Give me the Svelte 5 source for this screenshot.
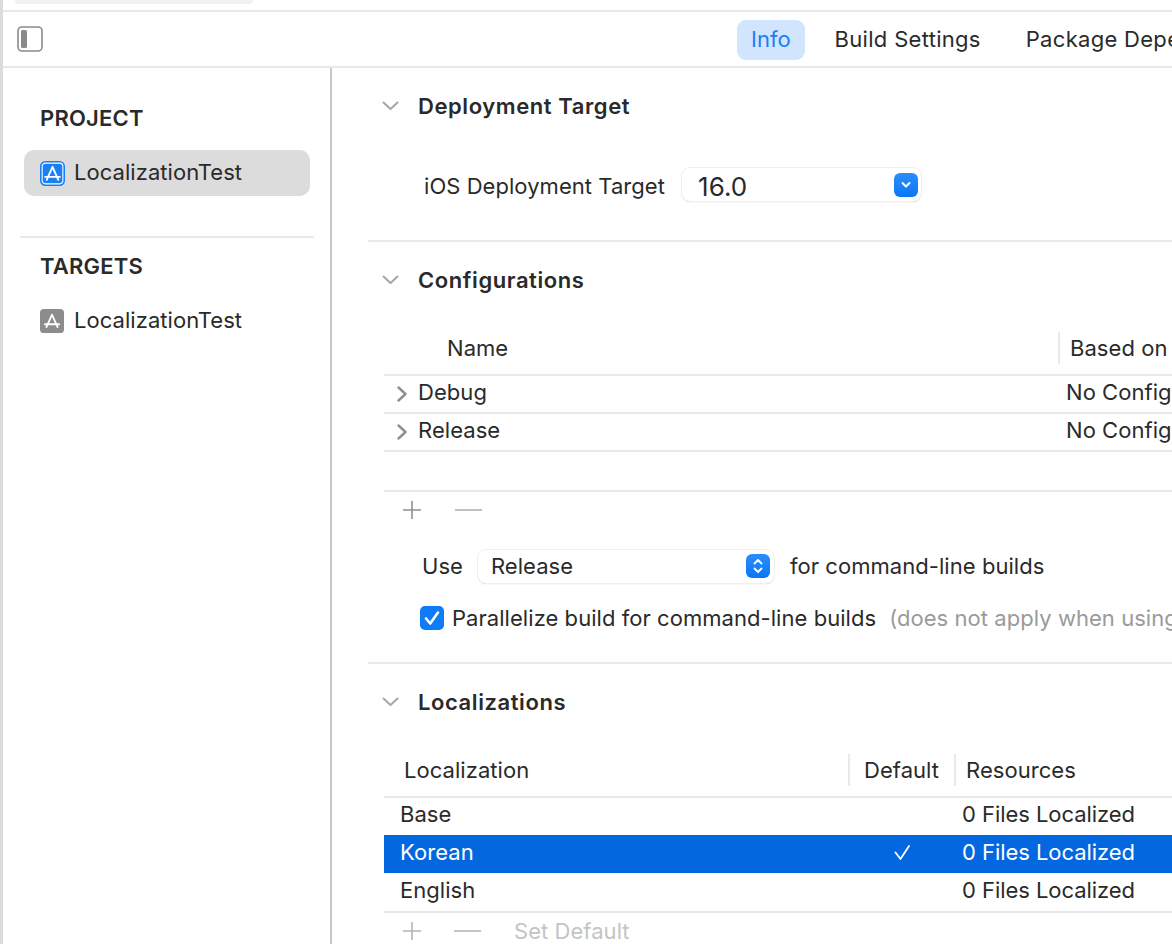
<script>
  const tabs = ['Info', 'Build Settings', 'Package Dependencies']
  const configs = [
    { name: 'Debug', based: 'No Configurations Set' },
    { name: 'Release', based: 'No Configurations Set' },
  ]
  const locales = [
    { name: 'Base', files: '0 Files Localized' },
    { name: 'Korean', files: '0 Files Localized', selected: true },
    { name: 'English', files: '0 Files Localized' },
  ]
</script>

{#snippet appIcon()}
  <path d="M9.3 4.4 5 14M9.3 4.4 13.6 14M3.8 11.8h11" fill="none" stroke="#fff" stroke-width="1.4" stroke-linecap="round" stroke-linejoin="round" />
{/snippet}

{#snippet disclosure()}
  <svg class="fold" width="17" height="10" viewBox="0 0 17 10"><path d="M1.5 1.5 8.5 8l7-6.5" fill="none" stroke="#a6a6a6" stroke-width="2" stroke-linecap="round" stroke-linejoin="round" /></svg>
{/snippet}

{#snippet chevron()}
  <svg class="chev" width="12" height="18" viewBox="0 0 12 18"><path d="M1.5 2.5 8.5 9l-7 6.5" fill="none" stroke="#8f8f8f" stroke-width="2.4" stroke-linecap="round" stroke-linejoin="round" /></svg>
{/snippet}

{#snippet addRemove(plusColor, minusColor)}
  <svg class="plus" width="18" height="18" viewBox="0 0 18 18"><path d="M9 0v18M0 9h18" stroke={plusColor} stroke-width="1.6" /></svg>
  <span class="minus" style="background:{minusColor}"></span>
{/snippet}

<div class="window">
  <div class="titlebar"><div class="tab-pill"></div></div>
  <header class="toolbar">
    <svg class="toggle" width="26" height="26" viewBox="0 0 26 26">
      <rect x="1" y="1" width="24" height="24" rx="4" fill="#fff" stroke="#8a8a8a" stroke-width="1.6" />
      <rect x="4" y="4" width="6" height="18" rx="1.5" fill="#8a8a8a" />
    </svg>
    <nav class="tabs">
      {#each tabs as tab, i}
        <span class="tab" class:active={i === 0}>{tab}</span>
      {/each}
    </nav>
  </header>

  <div class="body">
    <aside class="sidebar">
      <h3 class="group project">PROJECT</h3>
      <div class="item selected">
        <svg width="25" height="25" viewBox="0 0 18.6 18.6">
          <rect x=".6" y=".6" width="17.4" height="17.4" rx="3.4" fill="#fff" stroke="#1a7ff5" stroke-width="1.2" />
          <rect x="2" y="2" width="14.6" height="14.6" rx="2.2" fill="#1a7ff5" />
          {@render appIcon()}
        </svg>
        <span>LocalizationTest</span>
      </div>
      <hr />
      <h3 class="group">TARGETS</h3>
      <div class="item plain">
        <svg width="24" height="24" viewBox="0 0 18.6 18.6">
          <rect width="18.6" height="18.6" rx="3" fill="#8c8c8c" />
          {@render appIcon()}
        </svg>
        <span>LocalizationTest</span>
      </div>
    </aside>

    <main class="content">
      <section class="deployment">
        <div class="section-head">{@render disclosure()}<h2>Deployment Target</h2></div>
        <div class="target-row">
          <span class="target-label">iOS Deployment Target</span>
          <div class="select target">
            <span class="target-value">16.0</span>
            <span class="stepper">
              <svg width="12" height="8" viewBox="0 0 12 8"><path d="M2.5 2 6 5.5 9.5 2" fill="none" stroke="#fff" stroke-width="2" stroke-linecap="round" stroke-linejoin="round" /></svg>
            </span>
          </div>
        </div>
      </section>

      <section class="configurations">
        <div class="section-head">{@render disclosure()}<h2>Configurations</h2></div>
        <div class="table">
          <div class="config-head">
            <span class="col-name">Name</span>
            <span class="col-based">Based on Configuration File</span>
          </div>
          {#each configs as c}
            <div class="config-row">
              {@render chevron()}
              <span class="config-name">{c.name}</span>
              <span class="config-based">{c.based}</span>
            </div>
          {/each}
          <div class="spacer"></div>
          <div class="actions">{@render addRemove('#8f8f8f', '#c0c0c0')}</div>
        </div>
        <div class="use-row">
          <span class="use-label">Use</span>
          <div class="select use">
            <span>Release</span>
            <span class="stepper">
              <svg width="14" height="20" viewBox="0 0 14 20"><path d="M3.5 7.5 7 4l3.5 3.5M3.5 12.5 7 16l3.5-3.5" fill="none" stroke="#fff" stroke-width="1.8" stroke-linecap="round" stroke-linejoin="round" /></svg>
            </span>
          </div>
          <span class="use-after">for command-line builds</span>
        </div>
        <div class="check-row">
          <span class="checkbox">
            <svg width="24" height="24" viewBox="0 0 24 24"><path d="M6 12.5l4.2 5L18 6.5" fill="none" stroke="#fff" stroke-width="2.6" stroke-linecap="round" stroke-linejoin="round" /></svg>
          </span>
          <span>Parallelize build for command-line builds</span>
          <span class="hint">(does not apply when using schemes)</span>
        </div>
      </section>

      <section class="localizations">
        <div class="section-head">{@render disclosure()}<h2>Localizations</h2></div>
        <div class="table">
          <div class="loc-head">
            <span class="loc-col first">Localization</span>
            <span class="loc-col second">Default</span>
            <span class="loc-col third">Resources</span>
          </div>
          {#each locales as l}
            <div class="loc-row" class:selected={l.selected}>
              <span class="loc-name">{l.name}</span>
              <span class="loc-default">
                {#if l.selected}
                  <svg width="17" height="15" viewBox="0 0 17 15"><path d="M1.5 7.5 6.5 14 15 1" fill="none" stroke="#fff" stroke-width="1.8" stroke-linecap="round" stroke-linejoin="round" /></svg>
                {/if}
              </span>
              <span class="loc-files">{l.files}</span>
            </div>
          {/each}
          <div class="actions last">
            {@render addRemove('#b4b4b4', '#c4c4c4')}
            <span class="set-default">Set Default</span>
          </div>
        </div>
      </section>
    </main>
  </div>
</div>

<style>
  :global(body) {
    margin: 0;
    background: #fff;
    overflow: hidden;
  }

  .window {
    height: 944px;
    width: 1172px;
    overflow: hidden;
    box-sizing: border-box;
    border-left: 3px solid #dcdcdc;
    font-family: Inter, "Liberation Sans", sans-serif;
    font-size: 22px;
    letter-spacing: 0.05px;
    color: #2a2a2a;
    white-space: nowrap;
  }

  .titlebar {
    height: 10px;
    border-bottom: 2px solid #e9e9e9;
  }

  .tab-pill {
    width: 238px;
    height: 4px;
    margin-left: 12px;
    background: #f1f1f1;
    border-radius: 0 0 10px 10px;
  }

  .toolbar {
    height: 54px;
    display: flex;
    align-items: center;
    border-bottom: 2px solid #e9e9e9;
  }

  .toggle {
    margin-left: 14px;
    flex: none;
  }

  .tabs {
    display: flex;
    align-items: center;
    flex: none;
    margin-left: 694px;
    margin-top: 1px;
  }

  .tab {
    height: 40px;
    line-height: 39px;
    padding: 0 14px;
    margin-right: 17px;
    border-radius: 9px;
    letter-spacing: 0.3px;
  }

  .tab.active {
    background: #d2e5fe;
    color: #1a7ff5;
    margin-right: 16px;
    letter-spacing: 0;
  }

  .body {
    display: flex;
    height: 878px;
  }

  .sidebar {
    width: 329px;
    flex: none;
    box-sizing: border-box;
    border-right: 2px solid #c8c8c8;
  }

  .group {
    margin: 0 0 0 37px;
    font-size: 22px;
    font-weight: 600;
    line-height: 28px;
    letter-spacing: 0.2px;
  }

  .group.project {
    margin-top: 36px;
    margin-bottom: 18px;
  }

  .item {
    display: flex;
    align-items: center;
    gap: 9px;
    height: 46px;
    margin: 0 20px 0 21px;
    padding-left: 16px;
    border-radius: 10px;
  }

  .item span {
    margin-top: -2px;
  }

  .item.plain {
    margin-top: 18px;
    gap: 10px;
  }

  .item.selected {
    background: #dcdcdc;
  }

  hr {
    margin: 40px 16px 14px 17px;
    border: 0;
    border-top: 2px solid #e9e9e9;
  }

  .content {
    flex: 1;
    min-width: 0;
    padding-left: 36px;
  }

  section {
    border-bottom: 2px solid #e9e9e9;
  }

  section.localizations {
    border-bottom: 0;
  }

  .section-head {
    display: flex;
    align-items: center;
    height: 28px;
    padding-left: 14px;
    gap: 19px;
  }

  .fold {
    flex: none;
  }

  h2 {
    margin: 0;
    font-size: 22px;
    font-weight: 600;
    line-height: 28px;
    letter-spacing: 0.58px;
  }

  .deployment {
    height: 172px;
  }

  .deployment .section-head {
    padding-top: 24px;
  }

  .target-row {
    display: flex;
    align-items: center;
    margin-top: 48px;
    padding-left: 56px;
    gap: 17px;
  }

  .target-label {
    margin-top: 3px;
  }

  .select {
    display: flex;
    align-items: center;
    justify-content: space-between;
    box-sizing: border-box;
    height: 33px;
    background: #fff;
    border-radius: 8px;
    box-shadow: 0 0 0 1px #efefef, 0 1px 1px 0 #b5b5b5;
  }

  .select.target {
    width: 239px;
    padding: 0 3px 0 16px;
  }

  .target-value {
    font-size: 26px;
    line-height: 33px;
    margin-top: 4px;
  }

  .stepper {
    width: 24px;
    height: 24px;
    background: linear-gradient(#2b8dfa, #0b76f5);
    border-radius: 6px;
    display: flex;
    align-items: center;
    justify-content: center;
    flex: none;
  }

  .configurations {
    height: 420px;
  }

  .configurations .section-head {
    padding-top: 24px;
  }

  .table {
    margin-left: 16px;
  }

  .config-head {
    display: flex;
    align-items: center;
    height: 53px;
    margin-top: 27px;
    border-bottom: 2px solid #e9e9e9;
  }

  .col-name {
    margin-left: 63px;
    width: 611px;
    flex: none;
  }

  .col-based {
    border-left: 2px solid #e9e9e9;
    padding-left: 10px;
    height: 32px;
    line-height: 32px;
  }

  .config-row {
    display: flex;
    align-items: center;
    height: 32px;
    padding-bottom: 4px;
    border-bottom: 2px solid #e9e9e9;
  }

  .chev {
    margin-left: 13px;
    margin-top: 4px;
    flex: none;
  }

  .config-name {
    margin-left: 9px;
    width: 648px;
    flex: none;
  }

  .spacer {
    height: 38px;
    border-bottom: 2px solid #e9e9e9;
  }

  .actions {
    display: flex;
    align-items: center;
    height: 36px;
    padding-left: 19px;
  }

  .plus {
    flex: none;
  }

  .minus {
    width: 27px;
    height: 2px;
    margin-left: 34px;
    flex: none;
  }

  .use-row {
    display: flex;
    align-items: center;
    margin-top: 21px;
    padding-left: 54px;
    height: 34px;
    gap: 15px;
  }

  .select.use {
    width: 296px;
    padding: 0 4px 0 13px;
  }

  .use-after {
    margin-left: 1px;
  }

  .check-row {
    display: flex;
    align-items: center;
    gap: 8px;
    margin-top: 18px;
    padding-left: 52px;
    height: 34px;
  }

  .checkbox {
    width: 24px;
    height: 24px;
    border-radius: 5px;
    background: #0f7bf6;
    display: block;
    flex: none;
  }

  .hint {
    color: #9a9a9a;
    margin-left: 5px;
  }

  .localizations .section-head {
    padding-top: 24px;
  }

  .loc-head {
    display: flex;
    align-items: center;
    height: 53px;
    margin-top: 27px;
    border-bottom: 2px solid #e9e9e9;
  }

  .loc-col {
    height: 32px;
    line-height: 32px;
  }

  .first {
    width: 444px;
    padding-left: 20px;
    box-sizing: border-box;
    flex: none;
  }

  .second {
    width: 108px;
    box-sizing: border-box;
    flex: none;
    border-left: 2px solid #e9e9e9;
    border-right: 2px solid #e9e9e9;
    margin-left: 20px;
    padding-left: 14px;
  }

  .third {
    padding-left: 10px;
  }

  .loc-row {
    display: flex;
    align-items: center;
    height: 34px;
    padding-bottom: 4px;
  }

  .loc-row:nth-child(2) {
    height: 32px;
    padding-bottom: 5px;
  }

  .loc-row.selected {
    background: #0367e0;
    color: #fff;
  }

  .loc-row:nth-child(4) {
    border-bottom: 2px solid #e9e9e9;
  }

  .loc-name {
    width: 483px;
    padding-left: 16px;
    box-sizing: border-box;
    flex: none;
  }

  .loc-default {
    width: 70px;
    padding-right: 25px;
    display: flex;
    justify-content: center;
    flex: none;
  }

  .loc-files {
    letter-spacing: -0.05px;
  }

  .last .minus {
    margin-left: 33px;
  }

  .set-default {
    color: #c4c4c4;
    margin-left: 33px;
  }
</style>
